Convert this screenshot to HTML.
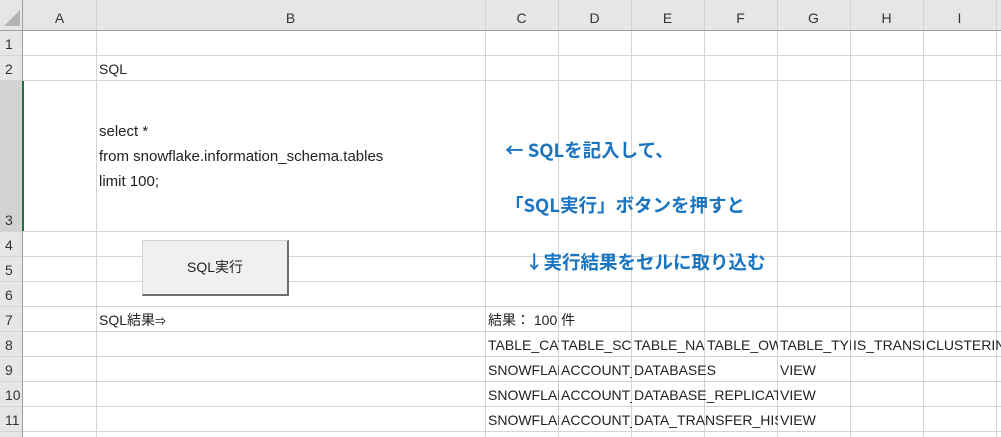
<!DOCTYPE html>
<html><head><meta charset="utf-8"><style>
body{margin:0;width:1001px;height:437px;overflow:hidden;background:#fff;position:relative;font-family:"Liberation Sans","Noto Sans CJK JP",sans-serif;}
.a{position:absolute;}
.vl{position:absolute;top:0;width:1px;height:437px;background:#d4d4d4;}
.hl{position:absolute;left:0;height:1px;width:1001px;background:#d4d4d4;}
.t{position:absolute;font-size:14px;color:#222;white-space:nowrap;line-height:16px;}
.rh{position:absolute;left:0;width:23px;font-size:14px;color:#333;text-align:left;padding-left:5px;box-sizing:border-box;}
.ch{position:absolute;top:0;height:30px;line-height:36px;font-size:14px;color:#333;text-align:center;}
.blue{position:absolute;font-size:18.5px;font-weight:bold;color:#1a74c0;white-space:nowrap;font-family:"Noto Sans CJK JP",sans-serif;line-height:22px;}
</style></head><body>
<div class="a" style="left:0;top:0;width:1001px;height:31px;background:#e6e6e6"></div>
<div class="a" style="left:0;top:0;width:23px;height:437px;background:#e6e6e6"></div>
<div class="a" style="left:0;top:81px;width:23px;height:150px;background:#d2d2d2"></div>
<div class="vl" style="left:96px"></div><div class="vl" style="left:485px"></div>
<div class="vl" style="left:558px"></div><div class="vl" style="left:631px"></div>
<div class="vl" style="left:704px"></div><div class="vl" style="left:777px"></div>
<div class="vl" style="left:850px"></div><div class="vl" style="left:923px"></div>
<div class="vl" style="left:996px"></div>
<div class="hl" style="top:55px"></div><div class="hl" style="top:80px"></div>
<div class="hl" style="top:231px"></div><div class="hl" style="top:256px"></div>
<div class="hl" style="top:281px"></div><div class="hl" style="top:306px"></div>
<div class="hl" style="top:331px"></div><div class="hl" style="top:356px"></div>
<div class="hl" style="top:381px"></div><div class="hl" style="top:406px"></div>
<div class="hl" style="top:431px"></div>
<div class="a" style="left:0;top:30px;width:1001px;height:1px;background:#9e9e9e"></div>
<div class="a" style="left:22px;top:0;width:1px;height:437px;background:#9e9e9e"></div>
<div class="a" style="left:22px;top:81px;width:2px;height:150px;background:#217346"></div>
<div class="a" style="left:4px;top:10px;width:0;height:0;border-left:16px solid transparent;border-bottom:16px solid #b4b4b4"></div>
<div class="ch" style="left:23px;width:73px">A</div>
<div class="ch" style="left:96px;width:389px">B</div>
<div class="ch" style="left:485px;width:73px">C</div>
<div class="ch" style="left:558px;width:73px">D</div>
<div class="ch" style="left:631px;width:73px">E</div>
<div class="ch" style="left:704px;width:73px">F</div>
<div class="ch" style="left:777px;width:73px">G</div>
<div class="ch" style="left:850px;width:73px">H</div>
<div class="ch" style="left:923px;width:73px">I</div>
<div class="rh" style="top:36px">1</div><div class="rh" style="top:61px">2</div>
<div class="rh" style="top:212px">3</div><div class="rh" style="top:237px">4</div>
<div class="rh" style="top:262px">5</div><div class="rh" style="top:287px">6</div>
<div class="rh" style="top:312px">7</div><div class="rh" style="top:337px">8</div>
<div class="rh" style="top:362px">9</div><div class="rh" style="top:387px">10</div>
<div class="rh" style="top:412px">11</div>
<div class="t" style="left:99px;top:61px">SQL</div>
<div class="t" style="left:99px;top:119px;line-height:25px;font-size:15px">select *<br>from snowflake.information_schema.tables<br>limit 100;</div>
<div class="t" style="left:99px;top:312px">SQL結果<span style="font-size:11px">⇒</span></div>
<div class="t" style="left:488px;top:312px">結果： 100 件</div>
<div class="a" style="left:486px;top:332px;width:515px;height:99px;overflow:hidden">
<div class="t" style="left:2px;top:5px;width:71px;overflow:hidden">TABLE_CATALOG</div>
<div class="t" style="left:75px;top:5px;width:71px;overflow:hidden">TABLE_SCHEMA</div>
<div class="t" style="left:148px;top:5px;width:71px;overflow:hidden">TABLE_NAME</div>
<div class="t" style="left:221px;top:5px;width:71px;overflow:hidden">TABLE_OWNER</div>
<div class="t" style="left:294px;top:5px;width:71px;overflow:hidden">TABLE_TYPE</div>
<div class="t" style="left:367px;top:5px;width:71px;overflow:hidden">IS_TRANSIENT</div>
<div class="t" style="left:440px;top:5px">CLUSTERING</div>
<div class="t" style="left:2px;top:30px;width:71px;overflow:hidden">SNOWFLAKE</div>
<div class="t" style="left:75px;top:30px;width:71px;overflow:hidden">ACCOUNT_USAGE</div>
<div class="t" style="left:148px;top:30px">DATABASES</div>
<div class="t" style="left:294px;top:30px">VIEW</div>
<div class="t" style="left:2px;top:55px;width:71px;overflow:hidden">SNOWFLAKE</div>
<div class="t" style="left:75px;top:55px;width:71px;overflow:hidden">ACCOUNT_USAGE</div>
<div class="t" style="left:148px;top:55px;width:144px;overflow:hidden">DATABASE_REPLICATION</div>
<div class="t" style="left:294px;top:55px">VIEW</div>
<div class="t" style="left:2px;top:80px;width:71px;overflow:hidden">SNOWFLAKE</div>
<div class="t" style="left:75px;top:80px;width:71px;overflow:hidden">ACCOUNT_USAGE</div>
<div class="t" style="left:148px;top:80px;width:144px;overflow:hidden">DATA_TRANSFER_HISTORY</div>
<div class="t" style="left:294px;top:80px">VIEW</div>
</div>
<div class="a" style="left:142px;top:240px;width:144px;height:53px;background:#f0f0f0;border-top:1px solid #d0d0d0;border-left:1px solid #d0d0d0;border-right:2px solid #6e6e6e;border-bottom:2px solid #6e6e6e;font-size:14px;color:#222;text-align:center;line-height:53px">SQL実行</div>
<div class="blue" style="left:505px;top:139px">← SQLを記入して、</div>
<div class="blue" style="left:505px;top:194px">「SQL実行」ボタンを押すと</div>
<div class="blue" style="left:525px;top:251px">↓実行結果をセルに取り込む</div>
</body></html>
